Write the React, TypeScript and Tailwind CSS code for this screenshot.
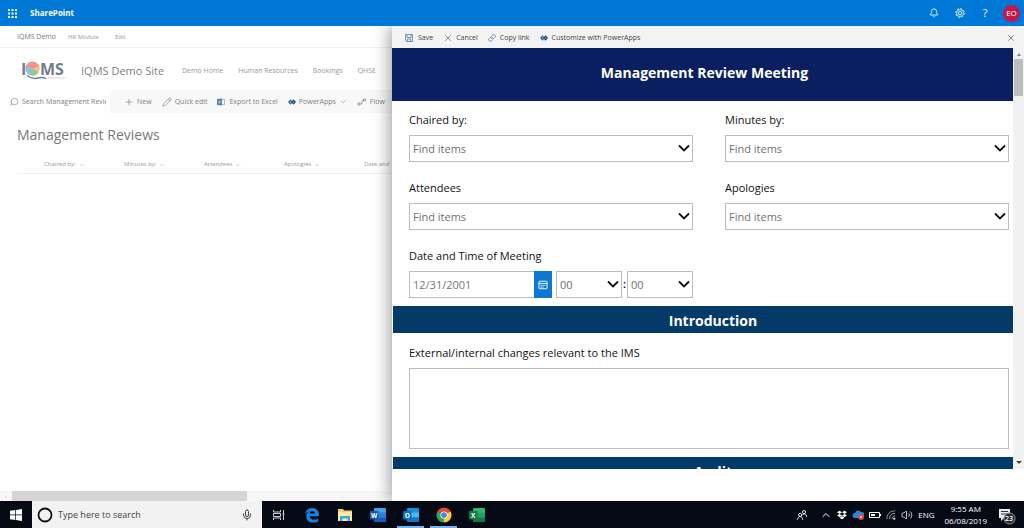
import React, { useState } from 'react';
import { Bell, ChevronDown, ChevronUp, Link, Mic, Pencil, Plus, Search, Volume2, X } from 'lucide-react';
import { SiDropbox } from 'react-icons/si';

const siteLinks = ['Demo Home', 'Human Resources', 'Bookings', 'QHSE'];
const columns = ['Chaired by:', 'Minutes by:', 'Attendees', 'Apologies', 'Date and'];

const PowerAppsIcon = () => (
  <svg viewBox="0 0 18 12" className="h-2 w-2 shrink-0" fill="none" strokeWidth="3">
    <path d="M5.5 2 9 6l-3.5 4L2 6z" stroke="#2f6f9f" />
    <path d="M12.5 2 16 6l-3.5 4L9 6z" stroke="#1f4e79" />
  </svg>
);

const SaveIcon = () => (
  <svg viewBox="0 0 16 16" className="size-2 shrink-0" fill="none" stroke="#4f7fa6" strokeWidth="1.6">
    <path d="M1 1h14v14H3l-2-2z" />
    <path d="M4 1v6h8V1M5 15v-5h6v5" />
  </svg>
);

const ExcelSheetIcon = () => (
  <svg viewBox="0 0 18 16" className="h-2 w-2 shrink-0">
    <path d="M10 2h7v12h-7" fill="none" stroke="#7f9cb5" strokeWidth="1.5" />
    <path d="M0 2 11 0v16L0 14z" fill="#4d7ba0" />
    <path d="m3 5 5 6M8 5l-5 6" stroke="#fff" strokeWidth="1.6" />
  </svg>
);

const FlowIcon = () => (
  <svg viewBox="0 0 18 16" className="h-2 w-2.5 shrink-0" fill="none" stroke="#7f8c98" strokeWidth="1.6">
    <path d="M1 10h4v4H1zM12 2h4v4h-4zM6 12h2l2-7h2" />
  </svg>
);

const IqmsLogo = () => (
  <svg viewBox="0 0 46 24" className="h-6 w-[46px] shrink-0" role="img" aria-label="IQMS">
    <text x="0" y="16" fontFamily="Open Sans, sans-serif" fontWeight="700" fontSize="16" fill="#747b94">I</text>
    <text x="19" y="16" fontFamily="Open Sans, sans-serif" fontWeight="700" fontSize="16" fill="#747b94">MS</text>
    <circle cx="11.500" cy="9.500" r="7" fill="#f0948c" />
    <path d="M11.500 9.500 4.800 7.500a7 7 0 0 0 4.200 8.500z" fill="#88c8dc" />
    <path d="M11.500 9.500 9 16a7 7 0 0 0 8.500-2.800z" fill="#8cc9a4" />
    <path d="m11.500 9.500 6 3.700a7 7 0 0 0 .8-5.600z" fill="#f5c47c" />
    <path d="M6 16.500q5 4 11 2.500 4-1 8 .5" fill="none" stroke="#747b94" strokeWidth="1.500" />
    <path d="M26 19h19" stroke="#c9ccd6" strokeWidth=".8" />
  </svg>
);

const GearIcon = () => (
  <svg viewBox="0 0 16 16" className="size-2.5" fill="none" stroke="currentColor">
    <circle cx="8" cy="8" r="5.600" strokeWidth="1.200" />
    <circle cx="8" cy="8" r="7" strokeWidth="1.400" strokeDasharray="2.700 2.800" />
    <circle cx="8" cy="8" r="2.600" strokeWidth="1.400" />
  </svg>
);

const CalendarIcon = () => (
  <svg viewBox="0 0 16 16" className="size-2.5" fill="none" stroke="#fff">
    <rect x="1.500" y="2" width="13" height="12" rx="1" strokeWidth="1.500" />
    <path d="M1.500 5.500h13" strokeWidth="1.500" />
    <path d="M4 8.500h8M4 11.300h5" strokeWidth="1.500" strokeDasharray="2 1" />
  </svg>
);

const OfficeIcon = ({ letter, tones }: { letter: string; tones: string[] }) => (
  <svg viewBox="0 0 16 16" className="size-4">
    <rect x="4" y="1" width="12" height="14" rx="1" fill={tones[0]} />
    <path d="M4 5.500h12v5H4z" fill={tones[1]} />
    <path d="M4 10.500h12V14a1 1 0 0 1-1 1H5a1 1 0 0 1-1-1z" fill={tones[2]} />
    <rect x="0" y="4" width="8.500" height="8.500" rx=".8" fill={tones[3]} />
    <text x="4.250" y="10.700" textAnchor="middle" fontFamily="Open Sans, sans-serif" fontWeight="700" fontSize="6.500" fill="#fff">{letter}</text>
  </svg>
);

const EdgeIcon = () => (
  <svg viewBox="0 0 16 16" className="size-4">
    <path
      d="M1 7.300C1.600 3.300 4.500 1 8.200 1c4.300 0 6.700 3 6.700 6.700v1.500H5.600c.2 2.400 2.200 3.400 4.300 3.400 1.600 0 3-.4 4.300-1.200v3c-1.400.8-3.100 1.200-5 1.200-4 0-6.900-2.400-6.900-6.200 0-2.600 1.600-4.700 3.700-5.500C3.800 4.500 2.200 5.500 1 7.300zm4.700-.8h5.200c0-1.500-.9-2.500-2.500-2.500-1.500 0-2.500 1-2.700 2.500z"
      fill="#1783e0"
    />
  </svg>
);

const FolderIcon = () => (
  <svg viewBox="0 0 16 16" className="size-4">
    <path d="M1 2h5l1 1.500h8V14H1z" fill="#f5cf63" />
    <path d="M1 5h14v9H1z" fill="#fde9a5" />
    <path d="M3 14V9h10v5h-2.500v-2.500h-5V14z" fill="#3fa9dc" />
  </svg>
);

const ChromeIcon = () => (
  <svg viewBox="0 0 16 16" className="size-4">
    <path d="M8 8 1.500 4.250A7.500 7.500 0 0 1 14.500 4.250z" fill="#e2483b" />
    <path d="M8 8 14.500 4.250A7.500 7.500 0 0 1 8 15.500z" fill="#f8cc3c" />
    <path d="M8 8v7.500A7.500 7.500 0 0 1 1.500 4.250z" fill="#37a355" />
    <circle cx="8" cy="8" r="3.600" fill="#fff" />
    <circle cx="8" cy="8" r="2.800" fill="#4587ee" />
  </svg>
);

const taskApps = [
  { name: 'Edge', icon: <EdgeIcon />, open: false },
  { name: 'File Explorer', icon: <FolderIcon />, open: false },
  { name: 'Word', icon: <OfficeIcon letter="W" tones={['#41a5ee', '#2b7cd3', '#185abd', '#1b56ad']} />, open: false },
  { name: 'Outlook', icon: <OfficeIcon letter="O" tones={['#1490df', '#50b6ee', '#0f78c8', '#0f6cbd']} />, open: true },
  { name: 'Chrome', icon: <ChromeIcon />, open: true },
  { name: 'Excel', icon: <OfficeIcon letter="X" tones={['#2fb574', '#21a366', '#107c41', '#107c41']} />, open: false },
];

function PickList({ id, label, text }: { id: string; label: string; text: string }) {
  return (
    <div className="relative flex-1">
      <select
        id={id}
        aria-label={label}
        className="block h-[27px] w-full appearance-none border border-[#bdbdbd] bg-white pl-[3px] pr-5 pt-px text-[11px] text-[#707070] outline-none"
      >
        <option>{text}</option>
      </select>
      <svg viewBox="0 0 12 8" className="pointer-events-none absolute right-[3px] top-[9px] h-2 w-3" fill="none">
        <path d="m1 1.500 5 5 5-5" stroke="#111" strokeWidth="1.800" />
      </svg>
    </div>
  );
}

function Field({ id, label }: { id: string; label: string }) {
  return (
    <div>
      <label htmlFor={id} className="block h-[23px] text-[11px] font-medium leading-4 text-[#111]">{label}</label>
      <PickList id={id} label={label} text="Find items" />
    </div>
  );
}

function SiteList() {
  return (
    <main className="flex w-[392px] shrink-0 flex-col overflow-hidden whitespace-nowrap bg-white text-[#999]">
      <nav className="flex h-[22px] shrink-0 items-center border-b border-[#f3f3f3] pl-[17px] pt-0.5 text-[6px]">
        <a href="#" className="w-[51px] text-[7px] text-[#777]">IQMS Demo</a>
        <a href="#" className="w-[47px]">HR Module</a>
        <a href="#">Edit</a>
      </nav>

      <div className="flex h-[42px] shrink-0 items-center pl-[21px] pt-1">
        <IqmsLogo />
        <a href="#" className="ml-3.5 w-[101px] text-[11px] text-[#808080]">IQMS Demo Site</a>
        <nav className="flex gap-[15px] text-[7px]">
          {siteLinks.map((item) => (
            <a key={item} href="#">{item}</a>
          ))}
        </nav>
      </div>

      <div className="flex h-[23px] shrink-0 items-center bg-[#f8f8f8] text-[7px] text-[#808080]">
        <label className="flex h-full w-[110px] shrink-0 items-center gap-[3px] bg-white pl-[9px] pt-px">
          <Search className="size-2.5 shrink-0 -scale-x-100" strokeWidth={1.5} />
          <input
            type="text"
            aria-label="Search"
            placeholder="Search Management Reviews"
            className="w-[84px] bg-transparent outline-none placeholder:text-[#808080]"
          />
        </label>
        <div className="ml-3.5 flex gap-2.5 pt-px">
          <button className="flex items-center gap-[3px]"><Plus className="size-2.5" strokeWidth={1.5} />New</button>
          <button className="flex items-center gap-[3px]"><Pencil className="size-2.5" strokeWidth={1.5} />Quick edit</button>
          <button className="flex items-center gap-1"><ExcelSheetIcon />Export to Excel</button>
          <button className="flex items-center gap-[3px]">
            <PowerAppsIcon />PowerApps<ChevronDown className="size-2" strokeWidth={1.5} />
          </button>
          <button className="flex items-center gap-[3px]"><FlowIcon />Flow</button>
        </div>
      </div>

      <div className="flex-1">
        <h1 className="ml-[17px] mt-3 text-sm leading-5 text-[#777]">Management Reviews</h1>
        <table className="ml-[17px] mt-2.5 w-full table-fixed border-b border-[#f0f0f0] text-left text-[6px]">
          <thead>
            <tr className="h-[18px]">
              <th className="w-[27px]" />
              {columns.map((name) => (
                <th key={name} className="w-20 pt-0.5 font-normal">
                  <span className="flex items-center gap-0.5">{name}<ChevronDown className="size-2" strokeWidth={1.2} /></span>
                </th>
              ))}
            </tr>
          </thead>
        </table>
      </div>

      <div className="flex h-2.5 shrink-0 items-center bg-[#f7f7f7]">
        <span className="w-3 text-center text-[6px]">‹</span>
        <div className="h-full w-3/5 bg-[#d5d5d5]" />
      </div>
    </main>
  );
}

function ReviewPanel({ onClose }: { onClose: () => void }) {
  return (
    <section className="relative flex min-w-0 flex-1 flex-col bg-white pb-8 shadow-[-2px_0_16px_rgba(0,0,0,0.4)]">
      <div className="flex h-[22px] shrink-0 items-center gap-2.5 bg-[#f3f3f3] pl-[13px] pr-2 pt-0.5 text-[7px] text-[#444]">
        <button className="flex items-center gap-[5px]"><SaveIcon />Save</button>
        <button className="flex items-center gap-[3px]" onClick={onClose}><X className="size-2.5 text-[#345f85]" strokeWidth={1.5} />Cancel</button>
        <button className="flex items-center gap-1"><Link className="size-2 text-[#2b6a99]" strokeWidth={2} />Copy link</button>
        <button className="flex items-center gap-1"><PowerAppsIcon />Customize with PowerApps</button>
        <button className="ml-auto" aria-label="Close" onClick={onClose}><X className="size-2.5" strokeWidth={1.5} /></button>
      </div>

      <div className="flex min-h-0 flex-1">
        <div className="min-w-0 flex-1 overflow-hidden">
          <h2 className="flex h-[53px] items-center justify-center bg-[#0a1f62] pb-1 pl-1 text-sm font-bold text-white">
            Management Review Meeting
          </h2>

          <div className="grid grid-cols-2 gap-x-8 gap-y-[18px] pb-2 pl-[17px] pr-1 pt-[11px]">
            <Field id="chaired" label="Chaired by:" />
            <Field id="minutes" label="Minutes by:" />
            <Field id="attendees" label="Attendees" />
            <Field id="apologies" label="Apologies" />
            <div>
              <label htmlFor="date" className="block h-[23px] text-[11px] font-medium leading-4 text-[#111]">Date and Time of Meeting</label>
              <div className="flex items-center text-[11px]">
                <input
                  id="date"
                  type="text"
                  defaultValue="12/31/2001"
                  className="h-[27px] w-[125px] border border-r-0 border-[#bdbdbd] pl-[3px] text-[#777] outline-none"
                />
                <button aria-label="Pick a date" className="mr-1 flex h-[27px] w-[18px] items-center justify-center bg-[#0b78d4] text-white">
                  <CalendarIcon />
                </button>
                <PickList id="hour" label="Hour" text="00" />
                <span className="w-[5px] text-center font-semibold text-black">:</span>
                <PickList id="minute" label="Minute" text="00" />
              </div>
            </div>
          </div>

          <h3 className="ml-px flex h-[27px] items-center justify-center bg-[#033a68] pl-5 pt-0.5 text-sm font-bold text-white">Introduction</h3>
          <div className="pb-2 pl-[17px] pr-1 pt-3">
            <label htmlFor="changes" className="block h-[23px] text-[11px] font-medium leading-4 text-[#111]">
              External/internal changes relevant to the IMS
            </label>
            <textarea id="changes" className="block h-[81px] w-full resize-none border border-[#bdbdbd] outline-none" />
          </div>
          <h3 className="ml-px flex h-[27px] items-center justify-center bg-[#033a68] pl-5 pt-0.5 text-sm font-bold text-white">Audit</h3>
        </div>

        <div className="flex w-[11px] shrink-0 flex-col items-center justify-between bg-[#f1f1f1] py-1">
          <div className="flex w-full flex-col items-center gap-[3px]">
            <svg viewBox="0 0 6 4" className="h-1 w-1.5"><path d="M1 4 3 1l2 3z" fill="#888" /></svg>
            <div className="h-[37px] w-[9px] bg-[#bdbdbd]" />
          </div>
          <svg viewBox="0 0 6 4" className="h-1 w-1.5"><path d="m0 0 3 3 3-3z" fill="#444" /></svg>
        </div>
      </div>
    </section>
  );
}

function Taskbar() {
  return (
    <footer className="relative flex h-[27px] shrink-0 items-center bg-[#060a14] text-white">
      <button aria-label="Start" className="flex h-full w-8 items-center justify-center">
        <svg viewBox="0 0 12 12" className="size-3" fill="#fff">
          <path d="M0 1.700 5.300 1v4.600H0zM6 .9l6-.9v5.600H6zM0 6.300h5.300V11L0 10.300zM6 6.300h6V12l-6-.9z" />
        </svg>
      </button>
      <label className="flex h-full w-[230px] items-center bg-[#f2f2f2] px-[5px] text-[#444]">
        <svg viewBox="0 0 16 16" className="size-4 shrink-0"><circle cx="8" cy="8" r="6.500" fill="none" stroke="#111" strokeWidth="1.800" /></svg>
        <input
          type="text"
          aria-label="Search Windows"
          placeholder="Type here to search"
          className="ml-[5px] min-w-0 flex-1 text-[9px] outline-none placeholder:text-[#444]"
        />
        <Mic className="mr-1 size-3 shrink-0" strokeWidth={2} />
      </label>
      <button aria-label="Task view" className="flex h-full w-[33px] items-center justify-center">
        <svg viewBox="0 0 14 12" className="h-3 w-3.5" fill="none" stroke="#ccc">
          <path d="M1.500 1v2h7V1M1.500 11V9h7v2M1.500 4.500h7v3h-7zM11.500 1v10M10.500 5h2" />
        </svg>
      </button>
      {taskApps.map((app) => (
        <button
          key={app.name}
          aria-label={app.name}
          className={`flex h-full w-[33px] items-center justify-center ${app.open ? 'bg-[linear-gradient(#78b4ec,#78b4ec)] bg-[length:27px_2px] bg-bottom bg-no-repeat' : ''}`}
        >
          {app.icon}
        </button>
      ))}

      <div className="ml-auto flex items-center gap-[5px] pr-2 text-[8px]">
        <svg viewBox="0 0 12 12" className="mr-2 size-2.5" fill="none" stroke="#eee" strokeWidth="1.200">
          <circle cx="3.800" cy="5.800" r="1.900" />
          <path d="M.8 11.800c0-5.200 6-5.200 6 0" />
          <circle cx="8.500" cy="2.500" r="1.900" />
          <path d="M6.500 5.800c2-2 5-.8 5 2.700" />
        </svg>
        <ChevronUp className="size-3" strokeWidth={2} />
        <SiDropbox className="size-2.5" />
        <svg viewBox="0 0 12 10" className="h-2.5 w-3">
          <path d="M3 8a2.500 2.500 0 0 1 0-5 3.300 3.300 0 0 1 6-1 3 3 0 0 1 1 6z" fill="#2685dc" />
          <circle cx="9" cy="7" r="3" fill="#e04343" />
          <path d="m8 6 2 2m0-2L8 8" stroke="#fff" strokeWidth=".8" />
        </svg>
        <svg viewBox="0 0 12 8" className="h-2 w-3">
          <path d="M.5 1.500h10v5H.5z" fill="none" stroke="#fff" />
          <path d="M2 3h4v2H2zM11 3h1v2h-1z" fill="#fff" />
        </svg>
        <svg viewBox="0 0 12 12" className="size-2.5" fill="none" stroke="#bbb">
          <path d="M1 11C1 5 5 1 11 1M4 11c0-4 3-7 7-7M7 11c0-2 2-4 4-4" />
          <circle cx="10" cy="10.500" r="1" fill="#fff" />
        </svg>
        <Volume2 className="size-3" strokeWidth={1.5} />
        <span>ENG</span>
        <div className="ml-[5px] text-center leading-3">
          <div>9:55 AM</div>
          <div>06/08/2019</div>
        </div>
        <button aria-label="Notifications" className="relative ml-1.5 h-5 w-[18px]">
          <svg viewBox="0 0 18 20" className="h-5 w-[18px]">
            <path d="M1 4h11v9H6l-3 3v-3H1z" fill="#eee" />
            <path d="M3 6.500h7M3 9h7" stroke="#333" />
            <circle cx="11.500" cy="13.500" r="5.500" fill="#26292f" stroke="#999" />
          </svg>
          <span className="absolute left-[7px] top-2 text-[7px] font-semibold leading-[11px]">23</span>
        </button>
      </div>
    </footer>
  );
}

export default function App() {
  const [panelOpen, setPanelOpen] = useState(true);

  return (
    <div className="flex h-screen flex-col overflow-hidden bg-white font-['Open_Sans',sans-serif]">
      <header className="relative z-10 flex h-[26px] shrink-0 items-center bg-[#0078d7] pl-2 pr-1 text-white">
        <button aria-label="App launcher">
          <svg viewBox="0 0 9 9" className="size-[9px]" fill="#fff">
            <path d="M0 0h2v2H0zM3.500 0h2v2h-2zM7 0h2v2H7zM0 3.500h2v2H0zM3.500 3.500h2v2h-2zM7 3.500h2v2H7zM0 7h2v2H0zM3.500 7h2v2h-2zM7 7h2v2H7z" />
          </svg>
        </button>
        <a href="#" className="ml-[13px] text-[8px] font-bold">SharePoint</a>
        <div className="ml-auto flex items-center gap-4">
          <button aria-label="Notifications"><Bell className="size-2.5" strokeWidth={2} /></button>
          <button aria-label="Settings"><GearIcon /></button>
          <button aria-label="Help" className="w-2 text-[11px] leading-4">?</button>
          <button className="-ml-0.5 flex size-[17px] items-center justify-center rounded-full bg-[#c4164d] text-[8px]">EO</button>
        </div>
      </header>

      <div className="flex min-h-0 flex-1">
        <SiteList />
        {panelOpen && <ReviewPanel onClose={() => setPanelOpen(false)} />}
      </div>

      <Taskbar />
    </div>
  );
}
